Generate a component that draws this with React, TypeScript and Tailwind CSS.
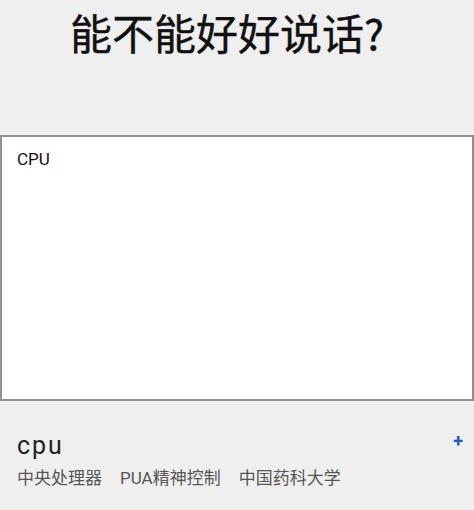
import React from "react";

const tags = ["中央处理器", "PUA精神控制", "中国药科大学"];

export default function App() {
  return (
    <div className="w-[474px] h-[510px] bg-[#efefef] flex flex-col overflow-hidden font-['Roboto','Noto_Sans_CJK_SC',sans-serif]">
      <div className="h-[135px] shrink-0 pt-[11px]">
        <h1 className="text-center pr-[20px] text-[42px] leading-[42px] font-normal text-[#111] font-['Noto_Sans_CJK_SC',sans-serif] [-webkit-text-stroke:0.4px_#111]">
          能不能好好说话?
        </h1>
      </div>

      <div className="h-[266px] shrink-0 bg-white border-2 border-[#8f8f8f] px-[15px] pt-[10px]">
        <div className="text-[17px] leading-[24px] text-[#111]">CPU</div>
      </div>

      <div className="flex-1 pl-[17px] pr-[11px] pt-[30px]">
        <div className="flex items-start justify-between">
          <div className="text-[25px] leading-[30px] tracking-[2px] text-[#222]">cpu</div>
          <button className="mt-[1px] text-[#2159c4] text-[18px] leading-[18px] font-bold">+</button>
        </div>
        <div className="mt-[5px] flex gap-[18px] text-[17px] leading-[24px] text-[#555]">
          {tags.map((t) => (
            <span key={t}>{t}</span>
          ))}
        </div>
      </div>
    </div>
  );
}
